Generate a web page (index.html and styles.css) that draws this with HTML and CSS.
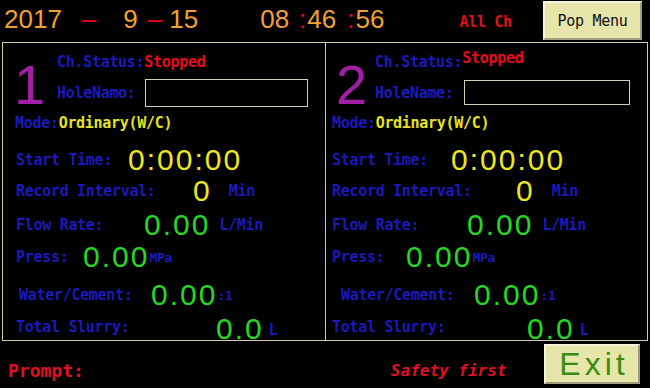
FILE: index.html
```html
<!DOCTYPE html>
<html lang="en">

<head>
  <meta charset="UTF-8" />
  <meta name="viewport" content="width=device-width, initial-scale=1.0" />
  <title>Grouting Recorder</title>
  <link rel="stylesheet" href="styles.css">
</head>

<body>
  <div class="top">
    <span class="d year">2017</span>
    <span class="d sep dash1">–</span>
    <span class="d month">9</span>
    <span class="d sep dash2">–</span>
    <span class="d day">15</span>
    <span class="d hour">08</span>
    <span class="d sep colon1">:</span>
    <span class="d min">46</span>
    <span class="d sep colon2">:</span>
    <span class="d sec">56</span>
    <span class="allch">All Ch</span>
    <button class="btn pop">Pop Menu</button>
  </div>

  <div class="board">
    <div class="ch ch1">
      <div class="head">
        <div class="num">1</div>
        <div class="fields">
          <div class="field"><span class="lbl">Ch.Status:</span><span class="status">Stopped</span></div>
          <div class="field"><span class="lbl">HoleNamo:</span><input class="hole" /></div>
        </div>
      </div>
      <div class="mode"><span class="lbl">Mode:</span><span class="mode-val">Ordinary(W/C)</span></div>
      <div class="row start"><span class="lbl">Start Time:</span><span class="val yel">0:00:00</span></div>
      <div class="row rec"><span class="lbl">Record Interval:</span><span class="val yel">0</span><span class="unit">Min</span></div>
      <div class="row flow"><span class="lbl">Flow Rate:</span><span class="val grn">0.00</span><span class="unit">L/Min</span></div>
      <div class="row press"><span class="lbl">Press:</span><span class="val grn">0.00</span><span class="unit small">MPa</span></div>
      <div class="row water"><span class="lbl">Water/Cement:</span><span class="val grn">0.00</span><span class="unit small">:1</span></div>
      <div class="row total"><span class="lbl">Total Slurry:</span><span class="val grn">0.0</span><span class="unit">L</span></div>
    </div>

    <div class="ch ch2">
      <div class="head">
        <div class="num">2</div>
        <div class="fields">
          <div class="field"><span class="lbl">Ch.Status:</span><span class="status">Stopped</span></div>
          <div class="field"><span class="lbl">HoleName:</span><input class="hole" /></div>
        </div>
      </div>
      <div class="mode"><span class="lbl">Mode:</span><span class="mode-val">Ordinary(W/C)</span></div>
      <div class="row start"><span class="lbl">Start Time:</span><span class="val yel">0:00:00</span></div>
      <div class="row rec"><span class="lbl">Record Interval:</span><span class="val yel">0</span><span class="unit">Min</span></div>
      <div class="row flow"><span class="lbl">Flow Rate:</span><span class="val grn">0.00</span><span class="unit">L/Min</span></div>
      <div class="row press"><span class="lbl">Press:</span><span class="val grn">0.00</span><span class="unit small">MPa</span></div>
      <div class="row water"><span class="lbl">Water/Cement:</span><span class="val grn">0.00</span><span class="unit small">:1</span></div>
      <div class="row total"><span class="lbl">Total Slurry:</span><span class="val grn">0.0</span><span class="unit">L</span></div>
    </div>
  </div>

  <div class="bottom">
    <span class="prompt">Prompt:</span>
    <span class="safety">Safety first</span>
    <button class="btn exit">Exit</button>
  </div>
</body>

</html>
```

FILE: styles.css
```css
body {
  margin: 0;
  width: 650px;
  height: 388px;
  background: #000;
  overflow: hidden;
  font-family: "DejaVu Sans Mono", "Liberation Mono", monospace;
}

/* top bar: date, clock, channel, menu */
.top {
  display: flex;
  align-items: flex-start;
  height: 42px;
}

.d {
  margin-top: 4px;
  font: 26px/30px "Liberation Sans", Arial, sans-serif;
  color: #f2a232;
}

.d.sep {
  color: #e80814;
}

.year { margin-left: 4px; }
.dash1 { margin-left: 20px; }
.month { margin-left: 27px; }
.dash2 { margin-left: 10px; }
.day { margin-left: 7px; }
.hour { margin-left: 62px; }
.colon1 { margin-left: 10px; }
.min { margin-left: 1px; }
.colon2 { margin-left: 11px; }
.sec { margin-left: 1px; }

.allch {
  margin: 13px 0 0 75px;
  font-size: 15px;
  font-weight: bold;
  letter-spacing: -0.3px;
  color: #e01018;
}

.btn {
  box-sizing: border-box;
  padding: 0;
  background: #e6e6aa;
  border: 2px solid;
  border-color: #f6f6dc #9e9e7e #9e9e7e #f6f6dc;
  cursor: pointer;
}

.pop {
  margin: 1px 8px 0 auto;
  width: 99px;
  height: 39px;
  font: 15px "DejaVu Sans Mono", monospace;
  letter-spacing: -0.3px;
  color: #111;
}

/* two channel panels */
.board {
  box-sizing: border-box;
  display: grid;
  grid-template-columns: 322px 1fr;
  margin-left: 2px;
  width: 646px;
  height: 299px;
  border: 1px solid #cfcfa2;
}

.ch {
  --pad: 13px;
  --wpad: 16px;
  --mode-pad: 12px;
  font-size: 15px;
  font-weight: bold;
  letter-spacing: -0.3px;
  white-space: nowrap;
}

.ch2 {
  --pad: 6px;
  --wpad: 15px;
  --mode-pad: 6px;
  border-left: 1px solid #cfcfa2;
}

.lbl,
.unit {
  color: #1a1abc;
}

.head {
  display: flex;
  height: 65px;
}

.num {
  margin: 14px 0 0 11px;
  width: 43px;
  font: 56px/56px "Liberation Sans", Arial, sans-serif;
  color: #a21ea6;
}

.ch2 .num {
  margin-left: 10px;
  width: 39px;
}

.fields {
  padding-top: 4px;
}

.field {
  display: flex;
  align-items: center;
  height: 30px;
}

.field + .field {
  height: 31px;
}

.status {
  color: #e40c1c;
}

.ch2 .status {
  align-self: flex-start;
  margin-top: 2px;
}

.hole {
  box-sizing: border-box;
  margin-left: 9px;
  width: 163px;
  height: 28px;
  padding: 0;
  background: transparent;
  border: 1px solid #d2d2ac;
  outline: none;
}

.ch2 .hole {
  width: 166px;
  height: 25px;
  margin-left: 10px;
}

.mode {
  display: flex;
  align-items: center;
  height: 30px;
  padding-left: var(--mode-pad);
}

.mode-val {
  color: #e6e41e;
}

.row {
  display: grid;
  grid-template-columns: var(--vx) auto auto;
  justify-content: start;
  align-items: center;
  height: 30px;
}

.row .lbl {
  padding-left: var(--pad);
}

.val {
  font: 30px/30px "Liberation Sans", Arial, sans-serif;
  letter-spacing: 2px;
}

.yel { color: #ece620; }
.grn { color: #24d824; }

.unit.small {
  font-size: 13px;
}

.start { --vx: 125px; margin-top: 7px; }
.rec { --vx: 190px; margin-top: 1px; }
.flow { --vx: 141px; margin-top: 4px; }
.press { --vx: 80px; margin-top: 2px; }
.water { --vx: 148px; margin-top: 8px; }
.total { --vx: 213px; margin-top: -1px; }
.ch2 .total { --vx: 201px; }

.rec .unit { margin-left: 17px; }
.flow .unit { margin-left: 9px; }
.press .unit { margin-left: 0; }
.water .unit { margin-left: 0; }
.water .lbl { padding-left: var(--wpad); }

.total .val {
  align-self: start;
  margin-top: 5px;
}

.total .unit {
  margin: 6px 0 0 5px;
}

/* bottom line */
.bottom {
  display: flex;
  align-items: flex-start;
  height: 47px;
}

.prompt {
  margin: 19px 0 0 8px;
  font-size: 18px;
  font-weight: bold;
  color: #e01020;
}

.safety {
  margin: 20px 0 0 307px;
  font-size: 16px;
  font-weight: bold;
  font-style: italic;
  color: #e01020;
}

.exit {
  margin: 3px 10px 0 auto;
  width: 96px;
  height: 40px;
  padding-left: 4px;
  font: 32px "Liberation Sans", Arial, sans-serif;
  letter-spacing: 4px;
  color: #3c8c14;
}
```
